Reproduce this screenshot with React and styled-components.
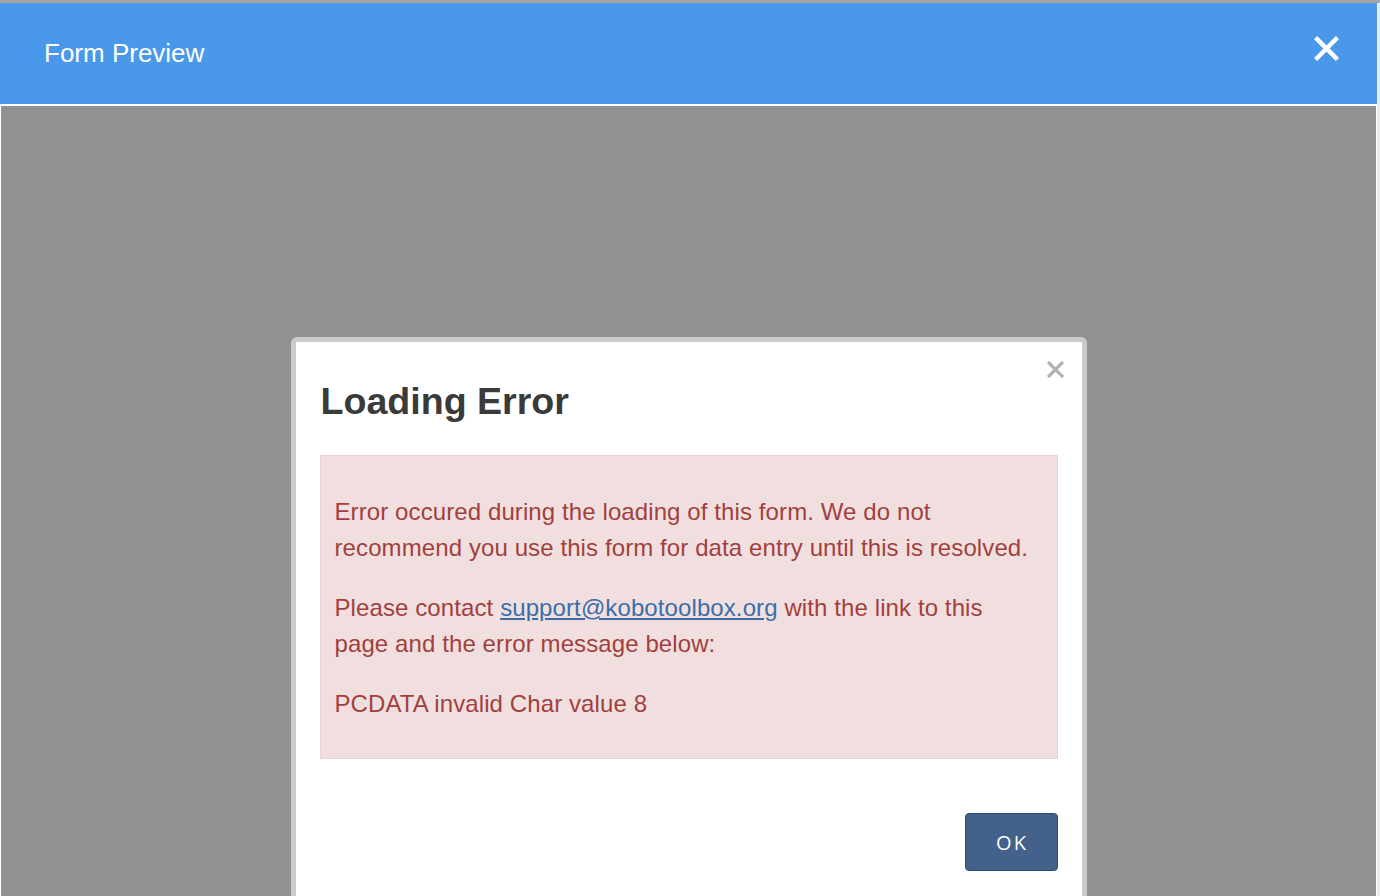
import styled, { createGlobalStyle } from "styled-components";

const Global = createGlobalStyle`
  html, body { margin: 0; padding: 0; height: 100%; }
  body {
    background: #ececec;
    font-family: "Liberation Sans", Arial, Helvetica, sans-serif;
    overflow: hidden;
  }
`;

const Page = styled.div`
  height: 896px;
  display: flex;
  flex-direction: column;
  border-top: 3px solid #a7a7a7;
  box-sizing: border-box;
`;

const Window = styled.div`
  width: 1377px;
  flex: 1;
  display: flex;
  flex-direction: column;
  min-height: 0;
`;

const Header = styled.header`
  height: 101px;
  flex-shrink: 0;
  background: #4a98ea;
  border-bottom: 1px solid #ffffff;
  display: flex;
  align-items: flex-start;
  justify-content: space-between;
  padding: 0 38px 0 44px;
`;

const HeaderTitle = styled.h1`
  margin: 0;
  align-self: center;
  color: #fff;
  font-size: 26px;
  font-weight: 400;
  line-height: 30px;
  padding-bottom: 1px;
`;

const HeaderClose = styled.button`
  margin-top: 33px;
  width: 25px;
  height: 25px;
  padding: 0;
  border: 0;
  background: none;
  cursor: pointer;
  display: flex;
`;

const Preview = styled.main`
  flex: 1;
  min-height: 0;
  background: #919191;
  border: 1px solid #ffffff;
  border-bottom: 0;
  overflow: hidden;
  display: flex;
  justify-content: center;
  align-items: flex-start;
`;

const Modal = styled.div`
  position: relative;
  margin-top: 231px;
  width: 796px;
  flex-shrink: 0;
  background: #fff;
  border: 5px solid #cbcbcb;
  border-radius: 6px;
  padding: 39px 24px 40px;
  box-sizing: border-box;
`;

const ModalClose = styled.button`
  position: absolute;
  top: 19px;
  right: 18px;
  width: 17px;
  height: 17px;
  padding: 0;
  border: 0;
  background: none;
  cursor: pointer;
  display: flex;
`;

const Title = styled.h2`
  margin: 0 0 33px;
  color: #3a3a3a;
  font-size: 37.6px;
  font-weight: 700;
  line-height: 41px;
  padding-left: 1px;
`;

const Alert = styled.div`
  background: #f1dfdf;
  border: 1px solid #ead3d6;
  color: #a23f3e;
  padding: 38px 24px 36px 14px;
  font-size: 24px;
  line-height: 36px;
  letter-spacing: 0.1px;
`;

const Para = styled.p`
  margin: 0 0 ${(p) => (p.$last ? 0 : 24)}px;
`;

const Link = styled.a`
  color: #3a6ea8;
  text-decoration: underline;
`;

const Footer = styled.div`
  display: flex;
  justify-content: flex-end;
  margin-top: 54px;
`;

const OkButton = styled.button`
  width: 93px;
  height: 58px;
  background: #43618a;
  border: 1px solid #2e4b72;
  border-radius: 4px;
  color: #fff;
  font-family: "Open Sans", "Liberation Sans", sans-serif;
  font-size: 20px;
  letter-spacing: 2px;
  padding: 0 0 0 2px;
  cursor: pointer;
`;

function Cross({ color, width }) {
  return (
    <svg width="100%" height="100%" viewBox="0 0 24 24">
      <path
        d="M3 3 L21 21 M21 3 L3 21"
        stroke={color}
        strokeWidth={width}
        strokeLinecap="square"
        fill="none"
      />
    </svg>
  );
}

export default function App() {
  return (
    <>
      <Global />
      <Page>
        <Window>
          <Header>
            <HeaderTitle>Form Preview</HeaderTitle>
            <HeaderClose aria-label="Close">
              <Cross color="#ffffff" width={4.2} />
            </HeaderClose>
          </Header>
          <Preview>
            <Modal>
              <ModalClose aria-label="Close">
                <Cross color="#b1b1b1" width={4.5} />
              </ModalClose>
              <Title>Loading Error</Title>
              <Alert>
                <Para>
                  Error occured during the loading of this form. We do not
                  recommend you use this form for data entry until this is
                  resolved.
                </Para>
                <Para>
                  Please contact{" "}
                  <Link href="mailto:support@kobotoolbox.org">
                    support@kobotoolbox.org
                  </Link>{" "}
                  with the link to this page and the error message below:
                </Para>
                <Para $last>PCDATA invalid Char value 8</Para>
              </Alert>
              <Footer>
                <OkButton>OK</OkButton>
              </Footer>
            </Modal>
          </Preview>
        </Window>
      </Page>
    </>
  );
}
